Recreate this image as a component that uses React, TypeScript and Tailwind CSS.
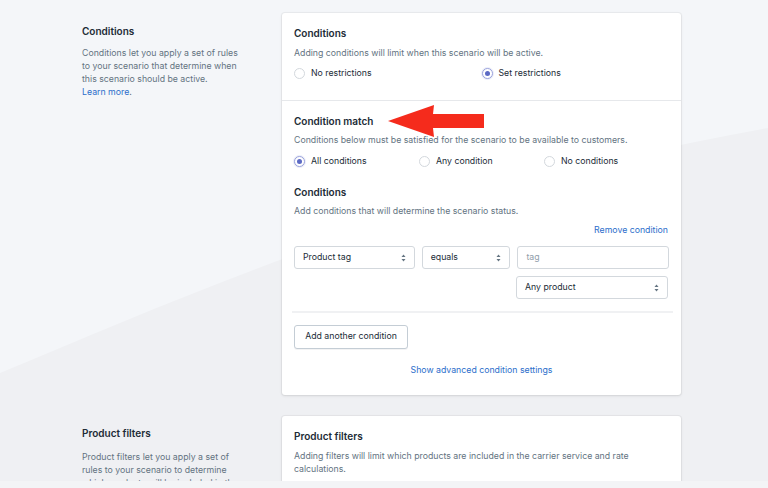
import React from "react";

const font = { fontFamily: "Inter, 'Noto Sans', 'Liberation Sans', sans-serif" };

function Radio({ checked, label }: { checked?: boolean; label: string }) {
  return (
    <label className="flex items-center gap-[6px] h-[13px]">
      {checked ? (
        <span className="w-[11px] h-[11px] rounded-full border border-[#9aa2dc] bg-white flex items-center justify-center shadow-[0_0_0_1px_rgba(92,106,196,0.12)]">
          <span className="w-[5px] h-[5px] rounded-full bg-[#5c6ac4]" />
        </span>
      ) : (
        <span className="w-[11px] h-[11px] rounded-full border border-[#d3d8dd] bg-white" />
      )}
      <span className="text-[8.75px] leading-[13px] text-[#212b36]">{label}</span>
    </label>
  );
}

function Chevrons() {
  return (
    <svg width="5" height="8" viewBox="0 0 5 8" className="shrink-0">
      <path d="M2.5 0.5 L4.5 3 L0.5 3 Z" fill="#637381" />
      <path d="M2.5 7.5 L4.5 5 L0.5 5 Z" fill="#637381" />
    </svg>
  );
}

function Select({ label, className }: { label: string; className: string }) {
  return (
    <div
      className={
        "h-[23px] rounded-[3px] border border-[#d3d8dd] bg-white flex items-center justify-between pl-[8px] pr-[8px] " +
        className
      }
    >
      <span className="text-[8.75px] text-[#212b36]">{label}</span>
      <Chevrons />
    </div>
  );
}

export default function App() {
  return (
    <div className="relative w-[768px] h-[488px] overflow-hidden bg-[#f4f6f9]" style={font}>
      <svg
        className="absolute inset-0"
        width="768"
        height="488"
        viewBox="0 0 768 488"
        aria-hidden="true"
      >
        <path d="M0 373 C 200 290, 420 190, 768 128 L768 488 L0 488 Z" fill="#eff0f3" />
      </svg>

      <div className="relative flex flex-col pt-[13px]">
        {/* Section 1 */}
        <div className="flex pl-[82px]">
          <div className="w-[200px] pt-[11px]">
            <div className="text-[10px] leading-[14px] font-semibold text-[#212b36]">Conditions</div>
            <p className="mt-[9px] text-[8.75px] leading-[13px] text-[#637381] w-[158px]">
              Conditions let you apply a set of rules to your scenario that determine when this scenario should be active.
              <br />
              <span className="text-[#2c6ecb]">Learn more</span>.
            </p>
          </div>

          <div className="w-[399px] bg-white rounded-[3px] shadow-[0_0_0_1px_rgba(63,63,68,0.05),0_1px_3px_rgba(63,63,68,0.12)]">
            <div className="px-[12px] pt-[13px] pb-[20px]">
              <div className="text-[10px] leading-[14px] font-semibold text-[#212b36]">Conditions</div>
              <p className="mt-[7px] text-[8.75px] leading-[13px] text-[#637381]">
                Adding conditions will limit when this scenario will be active.
              </p>
              <div className="mt-[7px] grid grid-cols-2">
                <Radio label="No restrictions" />
                <Radio checked label="Set restrictions" />
              </div>
            </div>
            <div className="h-px bg-[#e6e8eb]" />
            <div className="px-[12px] pt-[13px] pb-[18px]">
              <div className="text-[10px] leading-[14px] font-semibold text-[#212b36]">Condition match</div>
              <p className="mt-[6px] text-[8.75px] leading-[13px] text-[#637381]">
                Conditions below must be satisfied for the scenario to be available to customers.
              </p>
              <div className="mt-[8px] grid grid-cols-3">
                <Radio checked label="All conditions" />
                <Radio label="Any condition" />
                <Radio label="No conditions" />
              </div>

              <div className="mt-[17px] text-[10px] leading-[14px] font-semibold text-[#212b36]">Conditions</div>
              <p className="mt-[6px] text-[8.75px] leading-[13px] text-[#637381]">
                Add conditions that will determine the scenario status.
              </p>
              <div className="mt-[6px] flex justify-end pr-[1px]">
                <span className="text-[8.75px] leading-[13px] text-[#2c6ecb]">Remove condition</span>
              </div>
              <div className="mt-[9px] flex gap-[7px]">
                <Select label="Product tag" className="w-[121px]" />
                <Select label="equals" className="w-[89px]" />
                <div className="h-[23px] w-[152px] rounded-[3px] border border-[#d3d8dd] bg-white flex items-center pl-[8px]">
                  <span className="text-[8.75px] text-[#919eab]">tag</span>
                </div>
              </div>
              <div className="mt-[7px] flex justify-end pr-[1px]">
                <Select label="Any product" className="w-[152px]" />
              </div>
              <div className="mt-[12px] -ml-[2px] mr-[-4px] h-[2px] bg-[#f0f1f3]" />
              <button className="mt-[12px] h-[24px] w-[114px] rounded-[3px] border border-[#c4cdd5] bg-white text-[8.75px] text-[#212b36] shadow-[0_1px_0_rgba(22,29,37,0.05)]">
                Add another condition
              </button>
              <div className="mt-[15px] text-center text-[8.75px] leading-[13px] text-[#2c6ecb]">
                Show advanced condition settings
              </div>
            </div>
          </div>
        </div>

        {/* Section 2 */}
        <div className="mt-[21px] flex pl-[82px]">
          <div className="w-[200px] pt-[10px]">
            <div className="text-[10px] leading-[14px] font-semibold text-[#212b36]">Product filters</div>
            <p className="mt-[11px] text-[8.75px] leading-[13px] text-[#637381] w-[158px]">
              Product filters let you apply a set of rules to your scenario to determine which products will be included in the carrier service.
            </p>
          </div>
          <div className="w-[399px] bg-white rounded-[3px] shadow-[0_0_0_1px_rgba(63,63,68,0.05),0_1px_3px_rgba(63,63,68,0.12)] px-[12px] pt-[13px] pb-[20px]">
            <div className="text-[10px] leading-[14px] font-semibold text-[#212b36]">Product filters</div>
            <p className="mt-[7px] text-[8.75px] leading-[13px] text-[#637381] w-[350px]">
              Adding filters will limit which products are included in the carrier service and rate calculations.
            </p>
          </div>
        </div>
      </div>

      {/* annotation arrow */}
      <svg className="absolute left-0 top-0" width="768" height="488" viewBox="0 0 768 488" aria-hidden="true">
        <polygon points="388,121 434,105 433,114 484,114 484,128 433,128 434,137" fill="#f52b1c" />
      </svg>

      {/* bottom strip */}
      <div className="absolute left-0 right-0 bottom-0 h-[7px] bg-[#f3f4f6]" />
    </div>
  );
}
